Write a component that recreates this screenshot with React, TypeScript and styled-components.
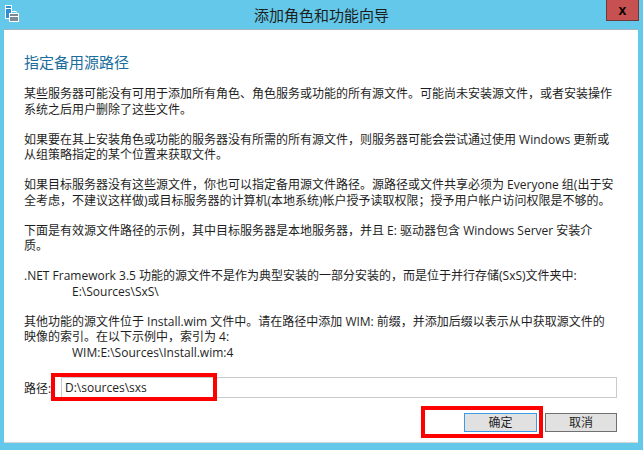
import React from "react";
import styled, { createGlobalStyle } from "styled-components";

const GlobalStyle = createGlobalStyle`
  html, body {
    margin: 0;
    padding: 0;
    background: #63c8e9;
  }
  * {
    box-sizing: border-box;
  }
`;

const FONT = `"Open Sans", "Noto Sans CJK SC", sans-serif`;

const Window = styled.div`
  width: 643px;
  height: 450px;
  background: #63c8e9;
  display: flex;
  flex-direction: column;
  font-family: ${FONT};
  color: #1e1e1e;
  overflow: hidden;
`;

const TitleBar = styled.div`
  height: 29px;
  display: grid;
  grid-template-columns: 1fr auto 1fr;
  align-items: start;
`;

const AppIcon = styled.svg`
  margin: 5px 0 0 5px;
  display: block;
`;

const Title = styled.div`
  font-size: 15px;
  line-height: 20px;
  padding-top: 5px;
  color: #1e1e1e;
`;

const CloseButton = styled.div`
  justify-self: end;
  width: 33px;
  height: 21px;
  margin-right: 4px;
  background: #c75050;
  border: 1px solid #6b3a3a;
  border-top: none;
  display: flex;
  align-items: center;
  justify-content: center;
  font-family: "Liberation Sans", sans-serif;
  font-weight: 700;
  font-size: 14px;
  color: #000;
`;

const Panel = styled.div`
  flex: 1;
  margin: 0 5px 7px 4px;
  background: #fff;
  border-top: 1px solid #9fb4bd;
  border-bottom: 1px solid #d6d6d6;
  padding: 0 21px 0 20px;
  display: flex;
  flex-direction: column;
`;

const Heading = styled.div`
  margin-top: 22px;
  font-size: 15px;
  line-height: 20px;
  color: #1b6d9c;
`;

const Body = styled.div`
  margin-top: 14px;
  font-size: 12px;
  line-height: 15.5px;
`;

const Paragraph = styled.div`
  margin-bottom: 14.5px;
  &:last-child {
    margin-bottom: 0;
  }
`;

const Line = styled.div<{ $indent?: boolean }>`
  white-space: nowrap;
  padding-left: ${(p) => (p.$indent ? "48px" : "0")};
`;

const PathRow = styled.div`
  position: relative;
  margin-top: 16px;
  display: flex;
  align-items: center;
`;

const Label = styled.label`
  width: 37px;
  font-size: 12px;
  line-height: 21px;
  padding-top: 2px;
`;

const PathInput = styled.div`
  flex: 1;
  height: 21px;
  border: 1px solid #cacaca;
  padding: 0 3px;
  font-size: 12px;
  line-height: 19px;
  color: #1e1e1e;
`;

const Highlight = styled.div<{ $left: number; $top: number; $w: number; $h: number }>`
  position: absolute;
  left: ${(p) => p.$left}px;
  top: ${(p) => p.$top}px;
  width: ${(p) => p.$w}px;
  height: ${(p) => p.$h}px;
  border: 4px solid #ff0000;
  pointer-events: none;
`;

const ButtonRow = styled.div`
  margin-top: 14px;
  display: flex;
  justify-content: flex-end;
  gap: 8px;
`;

const ButtonWrap = styled.div`
  position: relative;
`;

const Button = styled.div<{ $focused?: boolean }>`
  width: ${(p) => (p.$focused ? "73px" : "72px")};
  height: 19px;
  background: #e1e1e1;
  border: 1px solid ${(p) => (p.$focused ? "#3c9be6" : "#707070")};
  display: flex;
  align-items: center;
  justify-content: center;
  font-size: 12px;
  line-height: 17px;
  color: #1e1e1e;
`;

type Para = { text: string; indent?: boolean }[];

const paragraphs: Para[] = [
  [
    { text: "某些服务器可能没有可用于添加所有角色、角色服务或功能的所有源文件。可能尚未安装源文件，或者安装操作" },
    { text: "系统之后用户删除了这些文件。" },
  ],
  [
    { text: "如果要在其上安装角色或功能的服务器没有所需的所有源文件，则服务器可能会尝试通过使用 Windows 更新或" },
    { text: "从组策略指定的某个位置来获取文件。" },
  ],
  [
    { text: "如果目标服务器没有这些源文件，你也可以指定备用源文件路径。源路径或文件共享必须为 Everyone 组(出于安" },
    { text: "全考虑，不建议这样做)或目标服务器的计算机(本地系统)帐户授予读取权限；授予用户帐户访问权限是不够的。" },
  ],
  [
    { text: "下面是有效源文件路径的示例，其中目标服务器是本地服务器，并且 E: 驱动器包含 Windows Server 安装介" },
    { text: "质。" },
  ],
  [
    { text: ".NET Framework 3.5 功能的源文件不是作为典型安装的一部分安装的，而是位于并行存储(SxS)文件夹中:" },
    { text: "E:\\Sources\\SxS\\", indent: true },
  ],
  [
    { text: "其他功能的源文件位于 Install.wim 文件中。请在路径中添加 WIM: 前缀，并添加后缀以表示从中获取源文件的" },
    { text: "映像的索引。在以下示例中，索引为 4:" },
    { text: "WIM:E:\\Sources\\Install.wim:4", indent: true },
  ],
];

function WizardIcon() {
  return (
    <AppIcon width="14" height="17" viewBox="0 0 14 17">
      {/* server tower */}
      <rect x="0.5" y="0.5" width="6" height="13" fill="#2f8fd6" stroke="#fff" strokeWidth="1" />
      <rect x="1" y="3" width="5" height="1" fill="#fff" />
      {/* briefcase */}
      <rect x="4.5" y="8.5" width="9" height="8" fill="#7d8a94" stroke="#fff" strokeWidth="1" />
      <rect x="7" y="6.5" width="4" height="2" fill="none" stroke="#fff" strokeWidth="1" />
      <rect x="5" y="11" width="8" height="1" fill="#fff" />
    </AppIcon>
  );
}

export default function App() {
  return (
    <Window>
      <GlobalStyle />
      <TitleBar>
        <WizardIcon />
        <Title>添加角色和功能向导</Title>
        <CloseButton>x</CloseButton>
      </TitleBar>
      <Panel>
        <Heading>指定备用源路径</Heading>
        <Body>
          {paragraphs.map((para, i) => (
            <Paragraph key={i}>
              {para.map((line, j) => (
                <Line key={j} $indent={line.indent}>
                  {line.text}
                </Line>
              ))}
            </Paragraph>
          ))}
        </Body>
        <PathRow>
          <Label>路径:</Label>
          <PathInput>D:\sources\sxs</PathInput>
          <Highlight $left={27} $top={-3} $w={166} $h={28} />
        </PathRow>
        <ButtonRow>
          <ButtonWrap>
            <Button $focused>确定</Button>
            <Highlight $left={-43} $top={-7} $w={122} $h={32} />
          </ButtonWrap>
          <ButtonWrap>
            <Button>取消</Button>
          </ButtonWrap>
        </ButtonRow>
      </Panel>
    </Window>
  );
}
